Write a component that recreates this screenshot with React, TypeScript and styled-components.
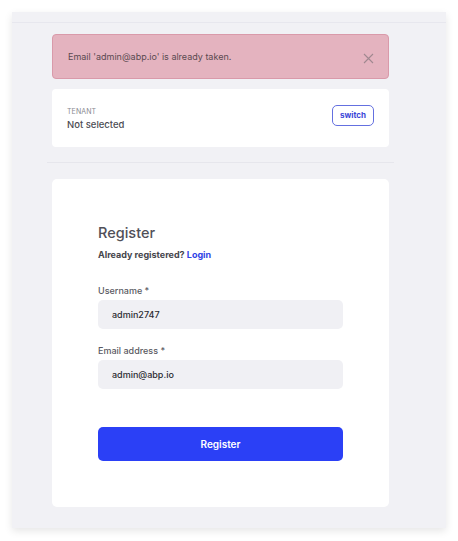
import React from 'react';
import styled, { createGlobalStyle } from 'styled-components';

const GlobalStyle = createGlobalStyle`
  html, body {
    margin: 0;
    background: #ffffff;
    font-family: Inter, "Noto Sans", sans-serif;
  }
`;

const Page = styled.div`
  padding: 12px 12px 0 12px;
  height: 541px;
  box-sizing: border-box;
`;

const Panel = styled.div`
  background-color: #f1f1f5;
  height: 516px;
  box-shadow: 0 3px 8px rgba(0, 0, 0, 0.1);
  display: flex;
  flex-direction: column;
`;

const TopStrip = styled.div`
  height: 10px;
  border-bottom: 1px solid #e7e7ee;
`;

const Content = styled.div`
  padding: 11px 0 0 40px;
  width: 337px;
  display: flex;
  flex-direction: column;
`;

const Alert = styled.div`
  height: 45px;
  box-sizing: border-box;
  background-color: #e4b3bf;
  border: 1px solid #d99aaa;
  border-radius: 4px;
  display: flex;
  align-items: center;
  justify-content: space-between;
  padding: 0 14px 0 15px;
  font-size: 9px;
  color: #5a4a50;
`;

const CloseButton = styled.button`
  background: none;
  border: none;
  padding: 0;
  margin-top: 4px;
  display: flex;
  cursor: pointer;
`;

const TenantCard = styled.div`
  margin-top: 10px;
  height: 58px;
  background: #ffffff;
  border-radius: 4px;
  display: flex;
  align-items: center;
  justify-content: space-between;
  padding: 0 15px 0 15px;
`;

const TenantInfo = styled.div`
  display: flex;
  flex-direction: column;
  gap: 3px;
`;

const TenantLabel = styled.span`
  font-size: 7px;
  color: #8a8a92;
  letter-spacing: 0.1px;
`;

const TenantValue = styled.span`
  font-size: 9.5px;
  font-weight: 500;
  color: #4b4b52;
`;

const SwitchButton = styled.button`
  font-family: Inter, sans-serif;
  font-size: 8px;
  font-weight: 700;
  color: #3a46d8;
  background: #ffffff;
  border: 1px solid #6470e0;
  border-radius: 5px;
  width: 42px;
  height: 21px;
  padding: 0;
  margin-top: -6px;
`;

const Divider = styled.div`
  margin: 15px -5px 0 -5px;
  border-top: 1px solid #e6e6ec;
`;

const RegisterCard = styled.div`
  margin-top: 16px;
  height: 328px;
  box-sizing: border-box;
  background: #ffffff;
  border-radius: 5px;
  padding: 45px 46px 0 46px;
  display: flex;
  flex-direction: column;
`;

const Title = styled.h2`
  margin: 0;
  font-size: 14.5px;
  font-weight: 500;
  color: #505058;
`;

const SubText = styled.p`
  margin: 8px 0 0 0;
  font-size: 9px;
  font-weight: 700;
  color: #45454c;
`;

const LoginLink = styled.a`
  color: #3043e6;
  text-decoration: none;
`;

const Field = styled.div<{ $top: number }>`
  margin-top: ${(p) => p.$top}px;
  display: flex;
  flex-direction: column;
  gap: 4px;
`;

const FieldLabel = styled.label`
  font-size: 9px;
  font-weight: 500;
  color: #5a5a62;
`;

const TextInput = styled.input`
  height: 29px;
  box-sizing: border-box;
  border: none;
  border-radius: 5px;
  background: #f0f0f4;
  padding: 0 14px;
  font-family: Inter, sans-serif;
  font-size: 9px;
  font-weight: 500;
  color: #2a2a30;
  outline: none;
`;

const SubmitButton = styled.button`
  margin-top: 38px;
  height: 34px;
  border: none;
  border-radius: 5px;
  background: #2b40f6;
  color: #ffffff;
  font-family: Inter, sans-serif;
  font-size: 10px;
  font-weight: 600;
  cursor: pointer;
`;

export default function App() {
  return (
    <>
      <GlobalStyle />
      <Page>
        <Panel>
          <TopStrip />
          <Content>
            <Alert>
              <span>Email 'admin@abp.io' is already taken.</span>
              <CloseButton aria-label="close">
                <svg width="11" height="11" viewBox="0 0 11 11">
                  <path d="M1 1L10 10M10 1L1 10" stroke="#a08890" strokeWidth="1.1" fill="none" />
                </svg>
              </CloseButton>
            </Alert>
            <TenantCard>
              <TenantInfo>
                <TenantLabel>TENANT</TenantLabel>
                <TenantValue>Not selected</TenantValue>
              </TenantInfo>
              <SwitchButton>switch</SwitchButton>
            </TenantCard>
            <Divider />
            <RegisterCard>
              <Title>Register</Title>
              <SubText>
                Already registered? <LoginLink href="#">Login</LoginLink>
              </SubText>
              <Field $top={25}>
                <FieldLabel>Username *</FieldLabel>
                <TextInput defaultValue="admin2747" />
              </Field>
              <Field $top={16}>
                <FieldLabel>Email address *</FieldLabel>
                <TextInput defaultValue="admin@abp.io" />
              </Field>
              <SubmitButton>Register</SubmitButton>
            </RegisterCard>
          </Content>
        </Panel>
      </Page>
    </>
  );
}
